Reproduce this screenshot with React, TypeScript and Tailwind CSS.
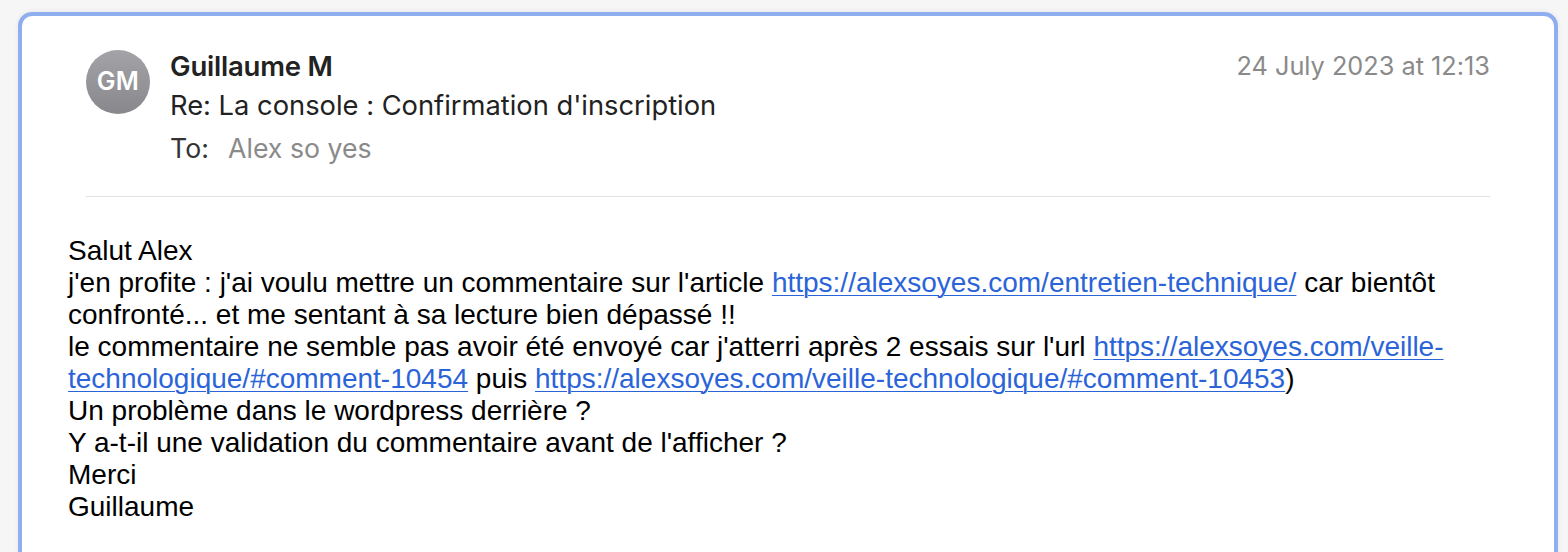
import React from "react";

const link = "text-[#2b64d8] underline decoration-1 underline-offset-[3px]";

function Url({ children }: { children: React.ReactNode }) {
  return <a href="#" className={link}>{children}</a>;
}

export default function App() {
  return (
    <div className="h-[552px] w-[1568px] overflow-hidden bg-[#f6f6f6] pl-[18px] pr-[10px] pt-[12px]">
      <div className="h-[560px] rounded-t-[14px] border-[4px] border-[#8eaef0] bg-white shadow-[0_0_6px_rgba(0,0,0,0.06)]">
        <div className="px-[64px] pt-[31px] font-['Inter','Helvetica',sans-serif] [font-feature-settings:'calt'_0]">
          <div className="flex items-start">
            <div className="mt-[3px] flex h-[64px] w-[64px] shrink-0 items-center justify-center rounded-full bg-gradient-to-b from-[#a4a4a8] to-[#88888c] text-[25px] font-semibold tracking-[0.3px] text-white">
              GM
            </div>
            <div className="ml-[20px] flex-1">
              <div className="flex items-start justify-between">
                <div className="text-[27.5px] font-semibold leading-[38px] tracking-[-0.2px] text-[#222]">Guillaume M</div>
                <div className="text-[25.3px] leading-[38px] text-[#8a8a8a]">24 July 2023 at 12:13</div>
              </div>
              <div className="text-[27.3px] leading-[42px] text-[#222]">Re: La console : Confirmation d'inscription</div>
              <div className="flex text-[26.7px] leading-[42px]">
                <span className="w-[58px] text-[#333]">To:</span>
                <span className="text-[#8a8a8a]">Alex so yes</span>
              </div>
            </div>
          </div>
          <div className="mt-[27px] h-px bg-[#e2e2e2]" />
        </div>
        <div className="pl-[46px] pt-[38px] font-['Liberation_Sans','Arial',sans-serif] text-[28px] leading-[32px] text-black">
          <div className="whitespace-nowrap">Salut Alex</div>
          <div className="whitespace-nowrap">
            j'en profite : j'ai voulu mettre un commentaire sur l'article{" "}
            <Url>https://alexsoyes.com/entretien-technique/</Url> car bientôt
          </div>
          <div className="whitespace-nowrap">confronté... et me sentant à sa lecture bien dépassé !!</div>
          <div className="whitespace-nowrap">
            le commentaire ne semble pas avoir été envoyé car j'atterri après 2 essais sur l'url{" "}
            <Url>https://alexsoyes.com/veille-</Url>
          </div>
          <div className="whitespace-nowrap">
            <Url>technologique/#comment-10454</Url> puis{" "}
            <Url>https://alexsoyes.com/veille-technologique/#comment-10453</Url>)
          </div>
          <div className="whitespace-nowrap">Un problème dans le wordpress derrière ?</div>
          <div className="whitespace-nowrap">Y a-t-il une validation du commentaire avant de l'afficher ?</div>
          <div className="whitespace-nowrap">Merci</div>
          <div className="whitespace-nowrap">Guillaume</div>
        </div>
      </div>
    </div>
  );
}
